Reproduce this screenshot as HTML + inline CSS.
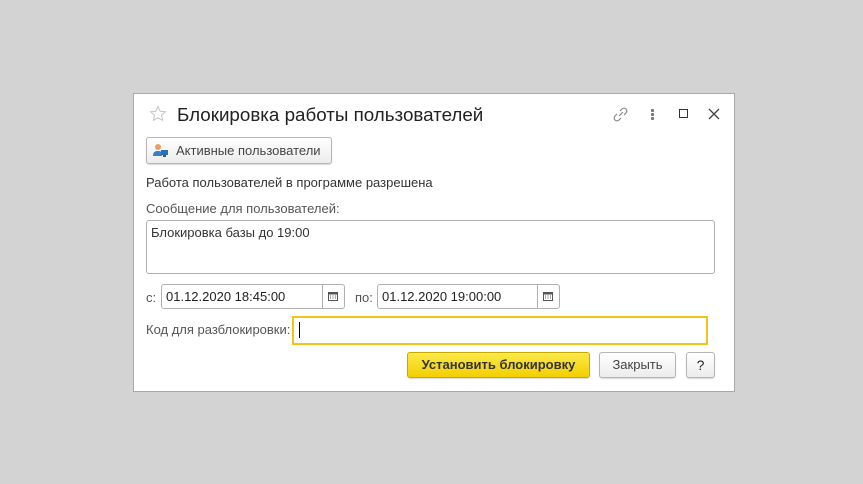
<!DOCTYPE html>
<html><head><meta charset="utf-8"><style>
body{margin:0;width:863px;height:484px;background:#d3d3d3;font-family:"Liberation Sans",Arial,sans-serif;position:relative;overflow:hidden;color:#404040}
.a{position:absolute}
.dlg{left:133px;top:93px;width:600px;height:297px;background:#fff;border:1px solid #a9a9a9}
.t{font-size:13px;white-space:nowrap}
.btn{border:1px solid #b5b5b5;border-radius:3px;background:linear-gradient(#fff,#ececec);box-shadow:0 1px 1px rgba(0,0,0,.15);font-size:13px;color:#444;box-sizing:border-box;text-align:center}
.fld{border:1px solid #b0b0b0;border-radius:3px;background:#fff;box-sizing:border-box}
</style></head><body>
<div class="a dlg"></div>
<svg class="a" style="left:149px;top:105px" width="18" height="18" viewBox="0 0 18 18"><path d="M9 1.5l2.2 4.8 5.2.5-3.9 3.5 1.1 5.1L9 12.8 4.4 15.4l1.1-5.1L1.6 6.8l5.2-.5z" fill="none" stroke="#c4c4c4" stroke-width="1"/></svg>
<div class="a" style="left:177px;top:104px;font-size:18.8px;color:#222;white-space:nowrap">Блокировка работы пользователей</div>
<svg class="a" style="left:612px;top:106px" width="17" height="17" viewBox="0 0 17 17"><g fill="none" stroke="#888" stroke-width="1.2"><path d="M7 10l4-4"/><path d="M8 5l2-2a2.5 2.5 0 0 1 4 4l-2 2"/><path d="M9 12l-2 2a2.5 2.5 0 0 1-4-4l2-2"/></g></svg>
<div class="a" style="left:651px;top:109px;width:3px;height:3px;background:#777;box-shadow:0 4px #777,0 8px #777;border-radius:1px"></div>
<div class="a" style="left:679px;top:109px;width:9px;height:9px;border:1.3px solid #333;box-sizing:border-box"></div>
<svg class="a" style="left:708px;top:108px" width="12" height="12"><path d="M1 1l10 10M11 1L1 11" stroke="#444" stroke-width="1.3"/></svg>
<div class="a btn" style="left:146px;top:137px;width:186px;height:27px"></div>
<svg class="a" style="left:153px;top:143px" width="16" height="14"><circle cx="5" cy="4" r="3" fill="#e8a060"/><path d="M0 13c0-4 2-5 5-5s4 1 4 3v2z" fill="#3a7fc4"/><rect x="8" y="7" width="7" height="5" fill="#2d6fb3"/><rect x="10" y="12" width="3" height="2" fill="#555"/></svg>
<div class="a t" style="left:176px;top:143px;color:#444">Активные пользователи</div>
<div class="a t" style="left:146px;top:175px;color:#333">Работа пользователей в программе разрешена</div>
<div class="a t" style="left:146px;top:201px;color:#555">Сообщение для пользователей:</div>
<div class="a fld" style="left:146px;top:220px;width:569px;height:54px"></div>
<div class="a t" style="left:151px;top:225px;color:#333">Блокировка базы до 19:00</div>
<div class="a t" style="left:146px;top:290px;color:#555">с:</div>
<div class="a fld" style="left:161px;top:284px;width:184px;height:25px"></div>
<div class="a" style="left:322px;top:285px;width:1px;height:23px;background:#b0b0b0"></div>
<div class="a t" style="left:166px;top:289px;color:#222">01.12.2020 18:45:00</div>
<svg class="a" style="left:328px;top:291px" width="10" height="10"><rect x="0.5" y="1.5" width="9" height="8" fill="none" stroke="#555"/><rect x="0.5" y="1.5" width="9" height="2" fill="#555"/><path d="M2 5h1M4.5 5h1M7 5h1M2 7h1M4.5 7h1M7 7h1" stroke="#555"/></svg>
<div class="a t" style="left:355px;top:290px;color:#555">по:</div>
<div class="a fld" style="left:377px;top:284px;width:183px;height:25px"></div>
<div class="a" style="left:537px;top:285px;width:1px;height:23px;background:#b0b0b0"></div>
<div class="a t" style="left:382px;top:289px;color:#222">01.12.2020 19:00:00</div>
<svg class="a" style="left:543px;top:291px" width="10" height="10"><rect x="0.5" y="1.5" width="9" height="8" fill="none" stroke="#555"/><rect x="0.5" y="1.5" width="9" height="2" fill="#555"/><path d="M2 5h1M4.5 5h1M7 5h1M2 7h1M4.5 7h1M7 7h1" stroke="#555"/></svg>
<div class="a t" style="left:146px;top:322px;color:#555">Код для разблокировки:</div>
<div class="a" style="left:292px;top:316px;width:416px;height:29px;border:2px solid #f2c414;box-sizing:border-box;background:#fff"></div>
<div class="a" style="left:299px;top:322px;width:1px;height:16px;background:#000"></div>
<div class="a btn" style="left:407px;top:352px;width:183px;height:26px;background:linear-gradient(#fbe94a,#f2cf00);border-color:#c7a800;font-weight:bold;color:#333;line-height:24px">Установить блокировку</div>
<div class="a btn" style="left:599px;top:352px;width:77px;height:26px;line-height:24px">Закрыть</div>
<div class="a btn" style="left:686px;top:352px;width:29px;height:26px;line-height:24px;font-size:14px;color:#222">?</div>
</body></html>
